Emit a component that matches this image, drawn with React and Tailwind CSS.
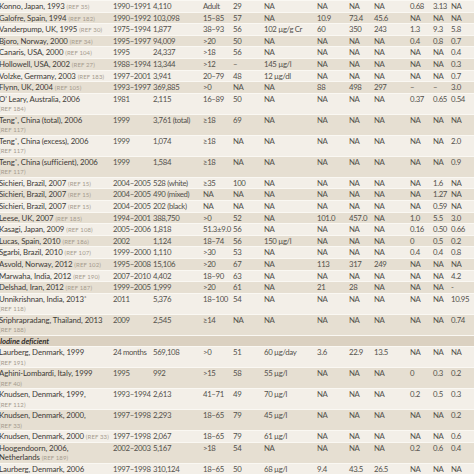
const Ref = ({ n }) => (
  <span className="text-[6px] tracking-[0.1px] text-[#a59b8e]">(REF {n})</span>
);

const Sup = () => <span className="relative -top-[2px] text-[6px]">*</span>;

const group1 = [
  { c: <>Konno, Japan, 1993 <Ref n="35" /></>, v: ['1990–1991', '4,110', 'Adult', '29', 'NA', 'NA', 'NA', 'NA', '0.68', '3.13', 'NA'] },
  { c: <>Galofre, Spain, 1994 <Ref n="182" /></>, v: ['1990–1992', '103,098', '15–85', '57', 'NA', '10.9', '73.4', '45.6', 'NA', 'NA', 'NA'] },
  { c: <>Vanderpump, UK, 1995 <Ref n="30" /></>, v: ['1975–1994', '1,877', '38–93', '56', '102 µg/g Cr', '60', '350', '243', '1.3', '9.3', '5.8'] },
  { c: <>Bjoro, Norway, 2000 <Ref n="34" /></>, v: ['1995–1997', '94,009', '>20', '50', 'NA', 'NA', 'NA', 'NA', '0.4', '0.8', '0.7'] },
  { c: <>Canaris, USA, 2000 <Ref n="104" /></>, v: ['1995', '24,337', '>18', '56', 'NA', 'NA', 'NA', 'NA', 'NA', 'NA', '0.4'] },
  { c: <>Hollowell, USA, 2002 <Ref n="27" /></>, v: ['1988–1994', '13,344', '>12', '–', '145 µg/l', 'NA', 'NA', 'NA', 'NA', 'NA', '0.3'] },
  { c: <>Volzke, Germany, 2003 <Ref n="183" /></>, v: ['1997–2001', '3,941', '20–79', '48', '12 µg/dl', 'NA', 'NA', 'NA', 'NA', 'NA', '0.7'] },
  { c: <>Flynn, UK, 2004 <Ref n="105" /></>, v: ['1993–1997', '369,885', '>0', 'NA', 'NA', '88', '498', '297', '–', '–', '3.0'] },
  { two: true, c: <>O’ Leary, Australia, 2006<br /><Ref n="184" /></>, v: ['1981', '2,115', '16–89', '50', 'NA', 'NA', 'NA', 'NA', '0.37', '0.65', '0.54'] },
  { two: true, c: <>Teng<Sup />, China (total), 2006<br /><Ref n="117" /></>, v: ['1999', '3,761 (total)', '≥18', '69', 'NA', 'NA', 'NA', 'NA', 'NA', 'NA', 'NA'] },
  { two: true, c: <>Teng<Sup />, China (excess), 2006<br /><Ref n="117" /></>, v: ['1999', '1,074', '≥18', 'NA', 'NA', 'NA', 'NA', 'NA', 'NA', 'NA', '2.0'] },
  { two: true, c: <>Teng<Sup />, China (sufficient), 2006<br /><Ref n="117" /></>, v: ['1999', '1,584', '≥18', 'NA', 'NA', 'NA', 'NA', 'NA', 'NA', 'NA', '0.9'] },
  { c: <>Sichieri, Brazil, 2007 <Ref n="15" /></>, v: ['2004–2005', '528 (white)', '≥35', '100', 'NA', 'NA', 'NA', 'NA', 'NA', '1.6', 'NA'] },
  { c: <>Sichieri, Brazil, 2007 <Ref n="15" /></>, v: ['2004–2005', '490 (mixed)', 'NA', 'NA', 'NA', 'NA', 'NA', 'NA', 'NA', '1.27', 'NA'] },
  { c: <>Sichieri, Brazil, 2007 <Ref n="15" /></>, v: ['2004–2005', '202 (black)', 'NA', 'NA', 'NA', 'NA', 'NA', 'NA', 'NA', '0.59', 'NA'] },
  { c: <>Leese, UK, 2007 <Ref n="185" /></>, v: ['1994–2001', '388,750', '>0', '52', 'NA', '101.0', '457.0', 'NA', '1.0', '5.5', '3.0'] },
  { c: <>Kasagi, Japan, 2009 <Ref n="108" /></>, v: ['2005–2006', '1,818', '51.3±9.0', '56', 'NA', 'NA', 'NA', 'NA', '0.16', '0.50', '0.66'] },
  { c: <>Lucas, Spain, 2010 <Ref n="186" /></>, v: ['2002', '1,124', '18–74', '56', '150 µg/l', 'NA', 'NA', 'NA', '0', '0.5', '0.2'] },
  { c: <>Sgarbi, Brazil, 2010 <Ref n="107" /></>, v: ['1999–2000', '1,110', '>30', '53', 'NA', 'NA', 'NA', 'NA', '0.4', '0.4', '0.8'] },
  { c: <>Asvold, Norway, 2012 <Ref n="102" /></>, v: ['1995–2008', '15,106', '>20', '67', 'NA', '113', '317', '249', 'NA', 'NA', 'NA'] },
  { c: <>Marwaha, India, 2012 <Ref n="190" /></>, v: ['2007–2010', '4,402', '18–90', '63', 'NA', 'NA', 'NA', 'NA', 'NA', 'NA', '4.2'] },
  { c: <>Delshad, Iran, 2012 <Ref n="187" /></>, v: ['1999–2005', '1,999', '>20', '61', 'NA', '21', '28', 'NA', 'NA', 'NA', '-'] },
  { two: true, c: <>Unnikrishnan, India, 2013<Sup /><br /><Ref n="118" /></>, v: ['2011', '5,376', '18–100', '54', 'NA', 'NA', 'NA', 'NA', 'NA', 'NA', '10.95'] },
  { two: true, c: <>Sriphrapradang, Thailand, 2013<br /><Ref n="188" /></>, v: ['2009', '2,545', '≥14', 'NA', 'NA', 'NA', 'NA', 'NA', 'NA', 'NA', '0.74'] },
];

const group2 = [
  { two: true, c: <>Laurberg, Denmark, 1999<br /><Ref n="191" /></>, v: ['24 months', '569,108', '>0', '51', '60 µg/day', '3.6', '22.9', '13.5', 'NA', 'NA', 'NA'] },
  { two: true, c: <>Aghini-Lombardi, Italy, 1999<br /><Ref n="40" /></>, v: ['1995', '992', '>15', '58', '55 µg/l', 'NA', 'NA', 'NA', '0', '0.3', '0.2'] },
  { two: true, c: <>Knudsen, Denmark, 1999,<br /><Ref n="112" /></>, v: ['1993–1994', '2,613', '41–71', '49', '70 µg/l', 'NA', 'NA', 'NA', '0.2', '0.5', '0.3'] },
  { two: true, c: <>Knudsen, Denmark, 2000,<br /><Ref n="33" /></>, v: ['1997–1998', '2,293', '18–65', '79', '45 µg/l', 'NA', 'NA', 'NA', 'NA', 'NA', '0.2'] },
  { c: <>Knudsen, Denmark, 2000 <Ref n="33" /></>, v: ['1997–1998', '2,067', '18–65', '79', '61 µg/l', 'NA', 'NA', 'NA', 'NA', 'NA', '0.6'] },
  { two: true, c: <>Hoogendoorn, 2006,<br />Netherlands <Ref n="189" /></>, v: ['2002–2003', '5,167', '>18', '54', 'NA', 'NA', 'NA', 'NA', '0.2', '0.6', '0.4'] },
  { two: true, c: <>Laurberg, Denmark, 2006<br /><Ref n="39" /></>, v: ['1997–1998', '310,124', '18–65', '50', '68 µg/l', '9.4', '43.5', '26.5', 'NA', 'NA', 'NA'] },
];

function Row({ row, dark }) {
  return (
    <div
      className={`grid grid-cols-[113px_40px_50px_30px_31px_53px_32px_25px_36px_23px_18px_1fr] border-t border-[#faf8f3] pt-[1px] ${
        dark ? 'bg-[#e6dfd2]' : 'bg-[#f3efe8]'
      } ${row.two ? 'h-[21px]' : 'h-[11.6px]'}`}
    >
      <div className="-ml-[1px] whitespace-nowrap text-[#3e3b37]">{row.c}</div>
      {row.v.map((t, i) => (
        <div key={i} className="whitespace-nowrap tracking-[-0.35px] text-[#54514c]">{t}</div>
      ))}
    </div>
  );
}

export default function App() {
  return (
    <div className="w-[474px] h-[474px] overflow-hidden bg-[#f3efe8] font-['Lato',sans-serif] text-[7.8px] tracking-[-0.1px] leading-[9.3px]">
      {group1.map((r, i) => (
        <Row key={i} row={r} dark={i % 2 === 1} />
      ))}
      <div className="h-[11.6px] border-t border-[#faf8f3] pt-[1px] bg-[#dbd1c1] font-bold italic text-[#36332f]">
        Iodine deficient
      </div>
      {group2.map((r, i) => (
        <Row key={i} row={r} dark={i % 2 === 1} />
      ))}
    </div>
  );
}
